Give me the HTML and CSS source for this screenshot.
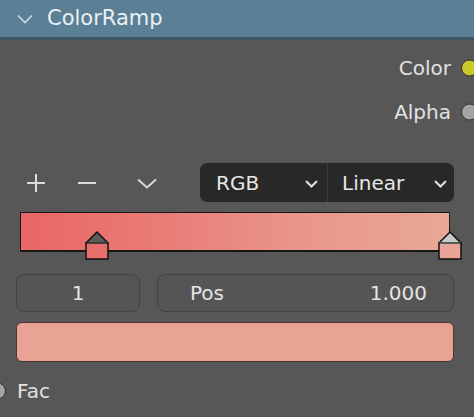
FILE: index.html
```html
<!DOCTYPE html>
<html>
<head>
<meta charset="utf-8">
<link rel="stylesheet" href="styles.css">
</head>
<body>
<div class="node">
  <div class="header">
    <svg class="hchev" width="16" height="10" viewBox="0 0 16 10"><path d="M1 1.5 L8 8.5 L15 1.5" fill="none" stroke="#d2dde4" stroke-width="1.6"/></svg>
    <span class="title">ColorRamp</span>
  </div>
  <div class="body">
    <div class="outputs">
      <div class="out-row"><span>Color</span><i class="socket yellow"></i></div>
      <div class="out-row"><span>Alpha</span><i class="socket grey"></i></div>
    </div>
    <div class="toolbar">
      <div class="tools">
        <span class="tool"><svg width="18" height="18" viewBox="0 0 18 18"><path d="M9 0 V18 M0 9 H18" stroke="#dcdcdc" stroke-width="2"/></svg></span>
        <span class="tool"><svg width="18" height="18" viewBox="0 0 18 18"><path d="M0 9 H18" stroke="#dcdcdc" stroke-width="2"/></svg></span>
        <span class="tool"><svg width="20" height="11" viewBox="0 0 20 11"><path d="M1 1.5 L10 9.5 L19 1.5" fill="none" stroke="#dcdcdc" stroke-width="1.8"/></svg></span>
      </div>
      <div class="dropdowns">
        <div class="dd"><span>RGB</span><svg width="13" height="8" viewBox="0 0 13 8"><path d="M1 1 L6.5 6.5 L12 1" fill="none" stroke="#e0e0e0" stroke-width="2"/></svg></div>
        <div class="dd"><span>Linear</span><svg width="13" height="8" viewBox="0 0 13 8"><path d="M1 1 L6.5 6.5 L12 1" fill="none" stroke="#e0e0e0" stroke-width="2"/></svg></div>
      </div>
    </div>
    <div class="ramp-wrap">
      <div class="ramp">
        <svg class="marker m1" width="24" height="29" viewBox="0 0 24 29"><path d="M1 12 L12 1 L23 12 Z" fill="#5c5c5c" stroke="#111" stroke-width="1.5" stroke-linejoin="miter"/><rect x="1" y="12" width="22" height="16" fill="#e86f6c" stroke="#111" stroke-width="1.5"/><path d="M1.5 12 H22.5" stroke="#4a4a4a" stroke-width="1.5"/></svg>
        <div class="dots"></div>
        <svg class="marker m2" width="24" height="29" viewBox="0 0 24 29"><path d="M1 12 L12 1 L23 12 Z" fill="#c9c9c9" stroke="#111" stroke-width="1.5"/><rect x="1" y="12" width="22" height="16" fill="#e8a496" stroke="#111" stroke-width="1.5"/><path d="M1.5 12 H22.5" stroke="#6a6a6a" stroke-width="1.5"/></svg>
      </div>
    </div>
    <div class="fields">
      <div class="field f1">1</div>
      <div class="field f2"><span>Pos</span><span>1.000</span></div>
    </div>
    <div class="swatch"></div>
    <div class="in-row"><i class="socket grey left"></i><span>Fac</span></div>
  </div>
</div>
</body>
</html>
```
FILE: styles.css
```css
html, body {
  margin: 0;
  padding: 0;
}
body {
  width: 474px;
  height: 417px;
  overflow: hidden;
  background: #575757;
  font-family: "DejaVu Sans", sans-serif;
  color: #e2e2e2;
}
.node {
  position: relative;
  width: 474px;
  height: 417px;
  overflow: hidden;
  background: #575757;
}
.header {
  height: 37px;
  background: #5b7f95;
  border-bottom: 3px solid #3f5767;
  display: flex;
  align-items: center;
  padding-left: 17px;
  box-sizing: content-box;
}
.hchev {
  margin-right: 14px;
  margin-top: 1px;
}
.title {
  font-size: 21px;
  color: #eaf0f3;
  line-height: 1;
}
.body {
  padding: 0 20px 0 16px;
}
.outputs {
  padding-top: 6px;
}
.out-row {
  height: 44px;
  display: flex;
  align-items: center;
  justify-content: flex-end;
  font-size: 20px;
  position: relative;
  padding-right: 3px;
}
.socket {
  position: absolute;
  box-sizing: border-box;
  width: 17px;
  height: 17px;
  border-radius: 50%;
  border: 1px solid #2e2e2e;
  top: 50%;
  transform: translateY(-50%);
}
.out-row .socket {
  right: -24px;
}
.yellow { background: #c8c82a; }
.grey { background: #a3a3a3; }
.toolbar {
  margin-top: 29px;
  height: 39px;
  display: flex;
  align-items: center;
  justify-content: space-between;
}
.tools {
  display: flex;
  align-items: center;
  padding-left: 11px;
}
.tool {
  display: flex;
  align-items: center;
  justify-content: center;
}
.tool:nth-child(1) { width: 18px; margin-right: 33px; }
.tool:nth-child(2) { width: 18px; margin-right: 41px; }
.tool:nth-child(3) { width: 20px; margin-top: 2px; }
.dropdowns {
  display: flex;
  height: 39px;
  background: #282828;
  border-radius: 7px;
  overflow: hidden;
}
.dd {
  width: 127px;
  box-sizing: border-box;
  display: flex;
  align-items: center;
  justify-content: space-between;
  font-size: 20px;
  color: #e6e6e6;
  padding: 0 9px 0 16px;
}
.dd + .dd {
  border-left: 1px solid #3c3c3c;
  padding-left: 14px;
  padding-right: 7px;
}
.dd svg { margin-top: 2px; }
.ramp-wrap {
  margin-top: 10px;
  height: 46px;
  padding: 0 4px;
}
.ramp {
  position: relative;
  height: 40px;
  box-sizing: border-box;
  border: 1px solid #161616;
  border-bottom-width: 2px;
  background: linear-gradient(to right, #ea6666 0%, #e97a74 30%, #e9968a 65%, #e8a898 100%);
}
.marker {
  position: absolute;
  top: 18px;
}
.m1 { left: 64px; }
.m2 { right: -13px; }
.dots {
  position: absolute;
  right: -1px;
  top: 0;
  height: 20px;
  width: 0;
  border-left: 1px dotted #222;
}
.fields {
  margin-top: 16px;
  display: flex;
  gap: 17px;
}
.field {
  height: 38px;
  box-sizing: border-box;
  border: 1px solid #434343;
  background: #555555;
  border-radius: 8px;
  font-size: 20px;
  color: #e4e4e4;
  display: flex;
  align-items: center;
}
.f1 {
  width: 124px;
  justify-content: center;
}
.f2 {
  flex: 1;
  justify-content: space-between;
  padding: 0 26px 0 32px;
}
.swatch {
  margin-top: 10px;
  height: 40px;
  box-sizing: border-box;
  background: #e8a395;
  border: 1px solid #4e3733;
  border-radius: 6px;
}
.in-row {
  position: relative;
  height: 58px;
  display: flex;
  align-items: center;
  font-size: 20px;
  padding-left: 1px;
}
.in-row .socket.left {
  left: -27px;
}
```
